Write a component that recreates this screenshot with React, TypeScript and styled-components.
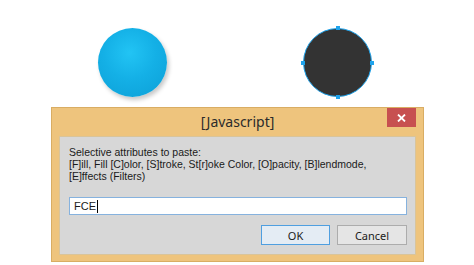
import React from "react";
import styled, {createGlobalStyle} from "styled-components";

const GlobalStyle = createGlobalStyle`
    html, body {
        margin: 0;
        padding: 0;
        background: #ffffff;
    }
    body {
        font-family: "Noto Sans", "Liberation Sans", Arial, sans-serif;
    }
`;

const Page = styled.div`
    width: 474px;
    height: 265px;
    overflow: hidden;
    display: flex;
    flex-direction: column;
`;

const CanvasRow = styled.div`
    display: flex;
    flex-direction: row;
    align-items: flex-start;
    height: 107px;
    box-sizing: border-box;
    padding: 28px 0 0 98px;
    gap: 136px;
`;

const BlueBall = styled.div`
    width: 69px;
    height: 69px;
    border-radius: 50%;
    background: radial-gradient(circle at 46% 36%, #22c4f4 0%, #14b0e6 45%, #0c9fd6 100%);
    box-shadow: 2px 3px 4px rgba(0, 0, 0, 0.22);
`;

const SelectedShape = styled.div`
    position: relative;
    width: 69px;
    height: 69px;
`;

const DarkBall = styled.div`
    width: 100%;
    height: 100%;
    box-sizing: border-box;
    border-radius: 50%;
    background: #333333;
    border: 1px solid #1ea3ec;
`;

const Anchor = styled.span<{ $x: string; $y: string }>`
    position: absolute;
    left: ${({ $x }) => $x};
    top: ${({ $y }) => $y};
    width: 4px;
    height: 4px;
    margin: -2px 0 0 -2px;
    background: #1ea3ec;
`;

const Dialog = styled.div`
    margin-left: 51px;
    width: 373px;
    height: 155px;
    box-sizing: border-box;
    background: #eec47d;
    border: 1px solid #d9ad63;
    display: flex;
    flex-direction: column;
    padding: 0 7px 6px 7px;
`;

const TitleBar = styled.div`
    height: 28px;
    display: grid;
    grid-template-columns: 1fr auto 1fr;
    align-items: start;
`;

const Title = styled.div`
    grid-column: 2;
    padding-top: 5px;
    font-family: "Noto Sans", "Liberation Sans", sans-serif;
    font-size: 14px;
    line-height: 18px;
    color: #2b2b2b;
`;

const CloseButton = styled.button`
    grid-column: 3;
    justify-self: end;
    width: 29px;
    height: 19px;
    padding: 0;
    border: none;
    background: #c75050;
    color: #ffffff;
    display: flex;
    align-items: center;
    justify-content: center;
`;

const Client = styled.div`
    flex: 1;
    box-sizing: border-box;
    background: #d7d7d7;
    border: 1px solid #d9c49a;
    padding: 9px 8px 0 9px;
    display: flex;
    flex-direction: column;
`;

const Message = styled.div`
    height: 51px;
    display: flex;
    flex-direction: column;
`;

const MessageLine = styled.div`
    height: 12px;
    font-family: "Liberation Sans", Arial, sans-serif;
    font-size: 10.5px;
    line-height: 12px;
    color: #1a1a1a;
    white-space: nowrap;
`;

const TextField = styled.div`
    height: 18px;
    box-sizing: border-box;
    background: #ffffff;
    border: 1px solid #86b2de;
    padding: 0 0 0 4px;
    display: flex;
    align-items: center;
    font-family: "Liberation Sans", Arial, sans-serif;
    font-size: 11px;
    color: #1a1a1a;
`;

const Caret = styled.span`
    display: inline-block;
    width: 1px;
    height: 13px;
    margin-left: 1px;
    background: #000000;
`;

const ButtonRow = styled.div`
    display: flex;
    justify-content: flex-end;
    gap: 7px;
    margin-top: 10px;
`;

const DialogButton = styled.button<{ $default?: boolean }>`
    width: ${({ $default }) => ($default ? "69px" : "70px")};
    height: 20px;
    box-sizing: border-box;
    padding: 0;
    border: 1px solid ${({ $default }) => ($default ? "#4f9fe0" : "#acacac")};
    background: ${({ $default }) => ($default ? "#e4ecf4" : "#e5e5e5")};
    font-family: "Noto Sans", "Liberation Sans", sans-serif;
    font-size: 11px;
    color: #1a1a1a;
`;

function CloseGlyph() {
    return (
        <svg width="9" height="8" viewBox="0 0 9 8">
            <path d="M1 0.5 L8 7.5 M8 0.5 L1 7.5" stroke="#ffffff" strokeWidth="1.8"/>
        </svg>
    );
}

const messageLines = [
    "Selective attributes to paste:",
    "[F]ill, Fill [C]olor, [S]troke, St[r]oke Color, [O]pacity, [B]lendmode,",
    "[E]ffects (Filters)",
];

export default function App() {
    return (
        <Page>
            <GlobalStyle/>
            <CanvasRow>
                <BlueBall/>
                <SelectedShape>
                    <DarkBall/>
                    <Anchor $x="50%" $y="0%"/>
                    <Anchor $x="100%" $y="50%"/>
                    <Anchor $x="50%" $y="100%"/>
                    <Anchor $x="0%" $y="50%"/>
                </SelectedShape>
            </CanvasRow>
            <Dialog>
                <TitleBar>
                    <Title>[Javascript]</Title>
                    <CloseButton><CloseGlyph/></CloseButton>
                </TitleBar>
                <Client>
                    <Message>
                        {messageLines.map((line) => (
                            <MessageLine key={line}>{line}</MessageLine>
                        ))}
                    </Message>
                    <TextField>FCE<Caret/></TextField>
                    <ButtonRow>
                        <DialogButton $default>OK</DialogButton>
                        <DialogButton>Cancel</DialogButton>
                    </ButtonRow>
                </Client>
            </Dialog>
        </Page>
    );
}
